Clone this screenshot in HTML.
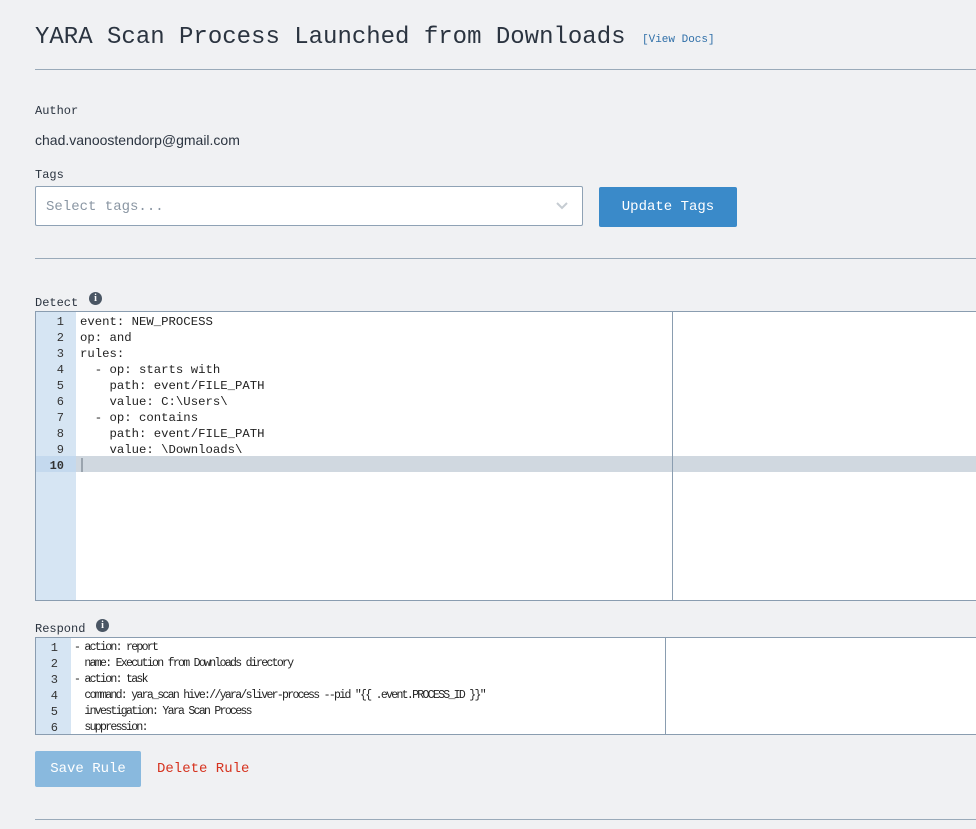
<!DOCTYPE html>
<html><head><meta charset="utf-8"><style>
body{margin:0;width:976px;height:829px;background:#f0f1f3;position:relative;overflow:hidden;font-family:"Liberation Mono",monospace;color:#2b3440}
.a{position:absolute;white-space:pre}
.hr{position:absolute;left:35px;right:0;height:1px;background:#9aaab9}
.ed{position:absolute;left:35px;right:-2px;background:#fff;border:1px solid #8a9db0;overflow:hidden}
.g{position:absolute;left:0;top:0;bottom:0;background:#d6e5f3}
.ln{position:absolute;text-align:right;font-size:12px;color:#333;line-height:16px}
.code{position:absolute;line-height:16px;color:#222}
.info{position:absolute;width:13px;height:13px;border-radius:50%;background:#4a5664;color:#fff;font:bold 10px/13px "Liberation Serif",serif;text-align:center}
</style></head><body>
<div class="a" style="left:35px;top:23px;font-size:24px;line-height:30px;color:#2b3440">YARA Scan Process Launched from Downloads</div>
<div class="a" style="left:642px;top:34px;font-size:11px;color:#2f6fa8">[View Docs]</div>
<div class="hr" style="top:69px"></div>
<div class="a" style="left:35px;top:104px;font-size:12px">Author</div>
<div class="a" style="left:35px;top:132px;font:14px 'Liberation Sans',sans-serif;color:#2b3440">chad.vanoostendorp@gmail.com</div>
<div class="a" style="left:35px;top:168px;font-size:12px">Tags</div>
<div class="a" style="left:35px;top:186px;width:546px;height:38px;background:#fff;border:1px solid #8fa2b5;border-radius:2px"></div>
<div class="a" style="left:46px;top:199px;font-size:14px;color:#8a96a3">Select tags...</div>
<svg class="a" style="left:555px;top:200px" width="14" height="12"><path d="M2 3l5 5 5-5" stroke="#c6ccd2" stroke-width="2" fill="none"/></svg>
<div class="a" style="left:599px;top:187px;width:138px;height:40px;background:#3a8ac9;border-radius:2px;color:#fff;font-size:14px;line-height:40px;text-align:center">Update Tags</div>
<div class="hr" style="top:258px"></div>
<div class="a" style="left:35px;top:296px;font-size:12px">Detect</div>
<div class="info" style="left:89px;top:292px">i</div>
<div class="ed" style="top:311px;height:288px">
 <div class="g" style="width:40px"></div>
 <div class="a" style="left:0;right:0;top:144px;height:16px;background:#d0d8e0"></div>
 <div class="a" style="left:0;width:40px;top:144px;height:16px;background:#c4d9ee"></div>
 <div class="a" style="left:636px;top:0;bottom:0;width:1px;background:#8a9db0"></div>
 <div class="ln" style="left:0;width:28px;top:2px">1<br>2<br>3<br>4<br>5<br>6<br>7<br>8<br>9<br><b>10</b></div>
 <div class="a" style="left:45px;top:146px;width:2px;height:14px;background:#9aa4ae"></div>
 <div class="code a" style="left:44px;top:2px;font-size:12.3px">event: NEW_PROCESS
op: and
rules:
  - op: starts with
    path: event/FILE_PATH
    value: C:\Users\
  - op: contains
    path: event/FILE_PATH
    value: \Downloads\</div>
</div>
<div class="a" style="left:35px;top:622px;font-size:12px">Respond</div>
<div class="info" style="left:96px;top:619px">i</div>
<div class="ed" style="top:637px;height:96px">
 <div class="g" style="width:35px"></div>
 <div class="a" style="left:629px;top:0;bottom:0;width:1px;background:#8a9db0"></div>
 <div class="ln" style="left:0;width:22px;top:2px">1<br>2<br>3<br>4<br>5<br>6</div>
 <div class="code a" style="left:38px;top:2px;font-size:11.5px;letter-spacing:-1.7px">- action: report
  name: Execution from Downloads directory
- action: task
  command: yara_scan hive://yara/sliver-process --pid "{{ .event.PROCESS_ID }}"
  investigation: Yara Scan Process
  suppression:</div>
</div>
<div class="a" style="left:35px;top:751px;width:106px;height:36px;background:#89b9de;border-radius:2px;color:#fff;font-size:14px;line-height:36px;text-align:center">Save Rule</div>
<div class="a" style="left:157px;top:761px;font-size:14px;color:#d6321e">Delete Rule</div>
<div class="hr" style="top:819px"></div>
</body></html>
